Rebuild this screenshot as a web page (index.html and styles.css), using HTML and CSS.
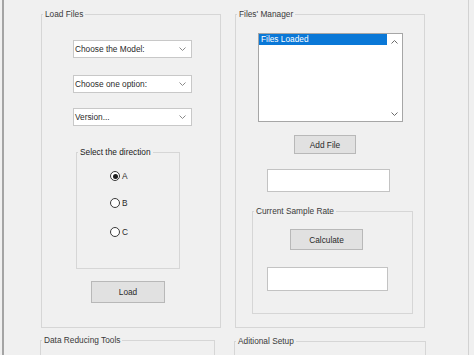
FILE: index.html
```html
<!DOCTYPE html>
<html lang="en">
<head>
    <meta charset="UTF-8">
    <meta name="viewport" content="width=device-width, initial-scale=1.0">
    <title>Files Tool</title>
    <link rel="stylesheet" href="styles.css">
</head>
<body>
    <div class="window">
      <div class="row top-row">
        <!-- Left panel -->
        <fieldset class="group load-files">
          <legend>Load Files</legend>
          <div class="dropdown first"><span>Choose the Model:</span><svg class="chev" width="7" height="4" viewBox="0 0 7 4"><path d="M0.5 0.5 L3.5 3.5 L6.5 0.5" fill="none" stroke="#8a8a8a" stroke-width="1"/></svg></div>
          <div class="dropdown second"><span>Choose one option:</span><svg class="chev" width="7" height="4" viewBox="0 0 7 4"><path d="M0.5 0.5 L3.5 3.5 L6.5 0.5" fill="none" stroke="#8a8a8a" stroke-width="1"/></svg></div>
          <div class="dropdown third"><span>Version...</span><svg class="chev" width="7" height="4" viewBox="0 0 7 4"><path d="M0.5 0.5 L3.5 3.5 L6.5 0.5" fill="none" stroke="#8a8a8a" stroke-width="1"/></svg></div>

          <fieldset class="group direction">
            <legend class="dark">Select the direction</legend>
            <label class="radio first-radio"><input type="radio" name="dir" checked>A</label>
            <label class="radio second-radio"><input type="radio" name="dir">B</label>
            <label class="radio third-radio"><input type="radio" name="dir">C</label>
          </fieldset>

          <button class="btn load-btn">Load</button>
        </fieldset>

        <!-- Right panel -->
        <fieldset class="group files-manager">
          <legend>Files' Manager</legend>
          <div class="listbox">
            <div class="list-items">
              <div class="list-item selected">Files Loaded</div>
            </div>
            <div class="list-scroll">
              <svg width="7" height="4" viewBox="0 0 7 4"><path d="M0.5 3.5 L3.5 0.5 L6.5 3.5" fill="none" stroke="#6a6a6a" stroke-width="1"/></svg>
              <svg width="7" height="4" viewBox="0 0 7 4"><path d="M0.5 0.5 L3.5 3.5 L6.5 0.5" fill="none" stroke="#6a6a6a" stroke-width="1"/></svg>
            </div>
          </div>
          <button class="btn add-btn">Add File</button>
          <input type="text" class="textbox box-one">

          <fieldset class="group sample-rate">
            <legend>Current Sample Rate</legend>
            <button class="btn calc-btn">Calculate</button>
            <input type="text" class="textbox box-two">
          </fieldset>
        </fieldset>
      </div>

      <div class="row bottom-row">
        <fieldset class="group reducing">
          <legend>Data Reducing Tools</legend>
        </fieldset>
        <fieldset class="group setup">
          <legend>Aditional Setup</legend>
        </fieldset>
      </div>
    </div>
</body>
</html>
```

FILE: styles.css
```css
/* Reset */
* {
  box-sizing: border-box;
  margin: 0;
  padding: 0;
}

body {
  font-family: "Liberation Sans", Arial, sans-serif;
  font-size: 8.3px;
  color: #333;
  background-color: #f0f0f0;
}

/* Window frame */
.window {
  margin-left: 2px;
  width: 467px;
  height: 355px;
  border-left: 2px solid #a4a4a4;
  border-right: 1px solid #d2d2d2;
  overflow: hidden;
}

.row {
  display: flex;
  align-items: flex-start;
}

/* Group boxes */
.group {
  border: 1px solid #d6d6d6;
  display: flex;
  flex-direction: column;
  align-items: flex-start;
  min-width: 0;
}

.group legend {
  margin-left: 1px;
  padding: 0 2px;
  line-height: 10px;
  height: 10px;
  color: #3a3a3a;
}

.group legend.dark {
  color: #1a1a1a;
}

.top-row .group.load-files,
.top-row .group.files-manager {
  margin-top: 9px;
  height: 319px;
}

.load-files {
  margin-left: 37px;
  width: 180px;
}

.files-manager {
  margin-left: 14px;
  width: 190px;
}

/* Dropdowns */
.dropdown {
  width: 119px;
  height: 18px;
  margin-left: 31px;
  background: #fff;
  border: 1px solid #c8c8c8;
  display: flex;
  align-items: center;
  justify-content: space-between;
  padding: 0 5px 0 1px;
  color: #2a2a2a;
}

.dropdown.first { margin-top: 21px; }
.dropdown.second { margin-top: 17px; }
.dropdown.third { margin-top: 15px; }

/* Direction group */
.direction {
  margin-top: 21px;
  margin-left: 34px;
  width: 104px;
  height: 122px;
}

.radio {
  display: flex;
  align-items: center;
  margin-left: 33px;
  height: 10px;
  line-height: 10px;
  color: #2a2a2a;
}

.radio input {
  appearance: none;
  -webkit-appearance: none;
  width: 10px;
  height: 10px;
  border: 1px solid #3a3a3a;
  border-radius: 50%;
  background: #fff;
  margin-right: 2px;
  display: flex;
  align-items: center;
  justify-content: center;
}

.radio input:checked::after {
  content: "";
  width: 5px;
  height: 5px;
  border-radius: 50%;
  background: #1e1e1e;
}

.first-radio { margin-top: 14px; }
.second-radio { margin-top: 17px; }
.third-radio { margin-top: 19px; }

/* Buttons */
.btn {
  font-family: inherit;
  font-size: 8.3px;
  color: #2a2a2a;
  background-color: #e1e1e1;
  border: 1px solid #b8b8b8;
  display: flex;
  align-items: center;
  justify-content: center;
}

.load-btn {
  margin-top: 12px;
  margin-left: 49px;
  width: 74px;
  height: 22px;
}

.add-btn {
  margin-top: 13px;
  margin-left: 58px;
  width: 62px;
  height: 19px;
}

.calc-btn {
  margin-top: 13px;
  margin-left: 37px;
  width: 73px;
  height: 21px;
}

/* List box */
.listbox {
  margin-top: 14px;
  margin-left: 22px;
  width: 145px;
  height: 89px;
  background: #fff;
  border: 1px solid #a6a6a6;
  display: flex;
}

.list-items {
  flex: 1;
}

.list-item {
  height: 11px;
  line-height: 11px;
  padding-left: 2px;
}

.list-item.selected {
  background-color: #0a78d7;
  color: #fff;
}

.list-scroll {
  width: 15px;
  display: flex;
  flex-direction: column;
  justify-content: space-between;
  align-items: center;
  padding: 6px 0 5px;
}

/* Text boxes */
.textbox {
  background: #fff;
  border: 1px solid #c3c3c3;
  outline: none;
}

.box-one {
  margin-top: 15px;
  margin-left: 31px;
  width: 123px;
  height: 23px;
}

.sample-rate {
  margin-top: 14px;
  margin-left: 16px;
  width: 161px;
  height: 108px;
}

.box-two {
  margin-top: 17px;
  margin-left: 14px;
  width: 121px;
  height: 24px;
}

/* Lower groups */
.reducing {
  margin-top: 7px;
  margin-left: 36px;
  width: 175px;
  height: 40px;
}

.setup {
  margin-top: 8px;
  margin-left: 19px;
  width: 192px;
  height: 40px;
}
```
